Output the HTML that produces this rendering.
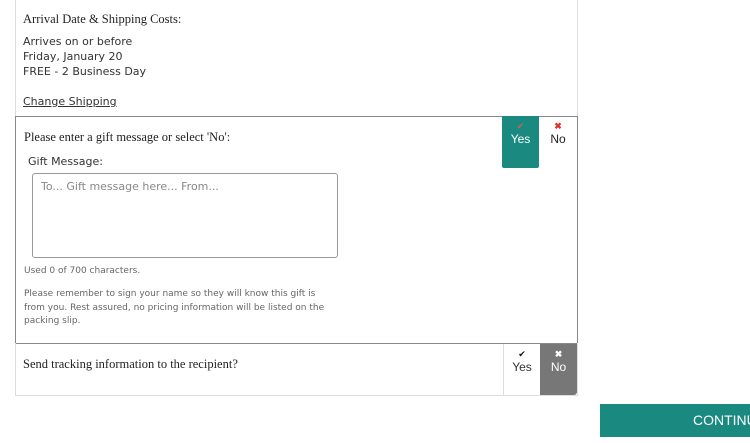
<!DOCTYPE html>
<html><head><meta charset="utf-8"><style>
*{margin:0;padding:0;box-sizing:border-box}
body{width:750px;height:443px;background:#fff;position:relative;overflow:hidden;font-family:"DejaVu Sans","Liberation Sans",sans-serif;color:#333}
.a{position:absolute}
.serif{font-family:"Liberation Serif","DejaVu Serif",serif;color:#222}
</style></head><body>
<div class="a" style="left:15px;top:0;width:563px;height:117px;border-left:1px solid #ddd;border-right:1px solid #ddd"></div>
<div class="a serif" style="left:23px;top:12px;font-size:12.5px">Arrival Date &amp; Shipping Costs:</div>
<div class="a" style="left:23px;top:34px;font-size:11px;line-height:15px;color:#333">Arrives on or before<br>Friday, January 20<br>FREE - 2 Business Day</div>
<div class="a" style="left:23px;top:95px;font-size:11px;text-decoration:underline;color:#333">Change Shipping</div>

<div class="a" style="left:15px;top:116px;width:563px;height:228px;border:1px solid #888"></div>
<div class="a serif" style="left:24px;top:130px;font-size:12.5px">Please enter a gift message or select 'No':</div>
<div class="a" style="left:28px;top:155px;font-size:11px;color:#333">Gift Message:</div>
<div class="a" style="left:32px;top:173px;width:306px;height:85px;border:1px solid #999;border-radius:3px;padding:6px 8px;font-size:11px;color:#888">To... Gift message here... From...</div>
<div class="a" style="left:24px;top:266px;font-size:9px;color:#666">Used 0 of 700 characters.</div>
<div class="a" style="left:24px;top:288px;font-size:9px;line-height:13.5px;color:#666;width:310px">Please remember to sign your name so they will know this gift is from you. Rest assured, no pricing information will be listed on the packing slip.</div>
<div class="a" style="left:502px;top:116px;width:37px;height:52px;background:#1a8a80;border-radius:0 0 2px 2px;text-align:center;color:#fff;font-family:'Liberation Sans',sans-serif;font-size:12px;padding-top:5px"><div style="color:#d35a5a;font-size:9px;line-height:11px">✔</div>Yes</div>
<div class="a" style="left:539px;top:116px;width:38px;height:52px;text-align:center;color:#222;font-family:'Liberation Sans',sans-serif;font-size:12px;padding-top:5px"><div style="color:#d33;font-size:9px;line-height:11px;font-weight:bold">✖</div>No</div>

<div class="a" style="left:15px;top:343px;width:563px;height:53px;border:1px solid #ddd;border-top:none"></div>
<div class="a serif" style="left:23px;top:357px;font-size:12.5px">Send tracking information to the recipient?</div>
<div class="a" style="left:503px;top:344px;width:37px;height:51px;border-left:1px solid #ddd;text-align:center;color:#333;font-family:'Liberation Sans',sans-serif;font-size:12px;padding-top:5px"><div style="color:#111;font-size:9px;line-height:11px">✔</div>Yes</div>
<div class="a" style="left:540px;top:344px;width:37px;height:51px;background:#777;border-radius:0 0 3px 0;text-align:center;color:#fff;font-family:'Liberation Sans',sans-serif;font-size:12px;padding-top:5px"><div style="font-size:9px;line-height:11px;font-weight:bold">✖</div>No</div>

<div class="a" style="left:600px;top:404px;width:160px;height:33px;background:#1a8a80;color:#fff;font-family:'Liberation Sans',sans-serif;font-size:14px;line-height:33px;padding-left:93px;white-space:nowrap">CONTINUE</div>
</body></html>
